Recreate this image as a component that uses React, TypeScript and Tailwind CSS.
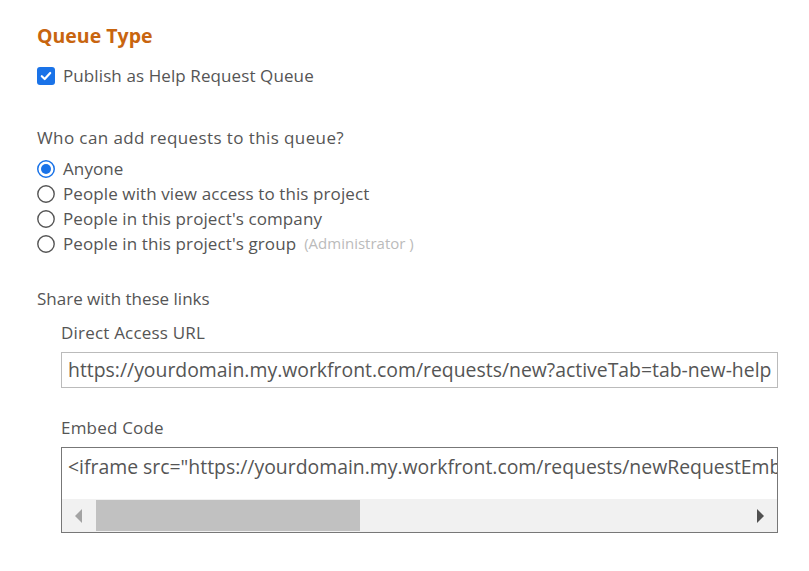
const options = [
  { label: "Anyone", checked: true },
  { label: "People with view access to this project" },
  { label: "People in this project's company" },
  { label: "People in this project's group", note: "(Administrator )" },
];

function Radio({ checked }: { checked?: boolean }) {
  return (
    <svg width="18" height="18" viewBox="0 0 18 18" className="shrink-0">
      {checked ? (
        <>
          <circle cx="9" cy="9" r="8.25" fill="none" stroke="#1a73e8" strokeWidth="1.5" />
          <circle cx="9" cy="9" r="5" fill="#1a73e8" />
        </>
      ) : (
        <circle cx="9" cy="9" r="8.2" fill="#fff" stroke="#555" strokeWidth="1.4" />
      )}
    </svg>
  );
}

export default function App() {
  return (
    <div className="min-h-[571px] w-[809px] bg-white pl-[37px] pt-[24px] text-[#555] font-['Open_Sans',sans-serif]">
      <h2 className="text-[19.5px] font-bold leading-[24px] text-[#c8650f]">Queue Type</h2>

      <label className="mt-[18px] flex items-center gap-[8px] text-[17px] leading-[20px] tracking-[0.1px]">
        <span className="flex h-[18px] w-[18px] items-center justify-center rounded-[3px] bg-[#1a73e8]">
          <svg width="12" height="12" viewBox="0 0 12 12">
            <path d="M1.8 6.2 4.7 9 10.2 3" fill="none" stroke="#fff" strokeWidth="2.2" strokeLinecap="round" strokeLinejoin="round" />
          </svg>
        </span>
        Publish as Help Request Queue
      </label>

      <p className="mt-[42px] text-[17px] leading-[20px] tracking-[0.4px]">Who can add requests to this queue?</p>

      <ul className="mt-[8px] flex flex-col text-[17px] tracking-[0.1px]">
        {options.map((o) => (
          <li key={o.label} className="flex h-[25px] items-center gap-[8px]">
            <Radio checked={o.checked} />
            <span>{o.label}</span>
            {o.note && <span className="text-[15px] tracking-normal text-[#bbb]">{o.note}</span>}
          </li>
        ))}
      </ul>

      <p className="mt-[33px] text-[17px] leading-[20px]">Share with these links</p>

      <div className="pl-[24px]">
        <p className="mt-[14px] text-[17px] leading-[20px] tracking-[0.2px]">Direct Access URL</p>
        <div className="mt-[9px] flex h-[36px] w-[717px] items-center overflow-hidden whitespace-nowrap border border-[#bbb] px-[6px] text-[19.4px]">
          https://yourdomain.my.workfront.com/requests/new?activeTab=tab-new-help
        </div>

        <p className="mt-[30px] text-[17px] leading-[20px] tracking-[0.2px]">Embed Code</p>
        <div className="mt-[9px] flex h-[86px] w-[717px] flex-col border border-[#777]">
          <div className="flex-1 overflow-hidden whitespace-nowrap px-[6px] pt-[7px] text-[19.4px] leading-[24px]">
            {'<iframe src="https://yourdomain.my.workfront.com/requests/newRequestEmbed" width="100%" height="600"></iframe>'}
          </div>
          <div className="flex h-[33px] items-center bg-[#f1f1f1]">
            <div className="flex w-[34px] justify-center">
              <svg width="8" height="14" viewBox="0 0 8 14"><path d="M7 0v14L0 7z" fill="#a3a3a3" /></svg>
            </div>
            <div className="h-[31px] w-[264px] bg-[#c1c1c1]" />
            <div className="flex-1" />
            <div className="flex w-[34px] justify-center">
              <svg width="8" height="14" viewBox="0 0 8 14"><path d="M1 0v14l7-7z" fill="#505050" /></svg>
            </div>
          </div>
        </div>
      </div>
    </div>
  );
}
